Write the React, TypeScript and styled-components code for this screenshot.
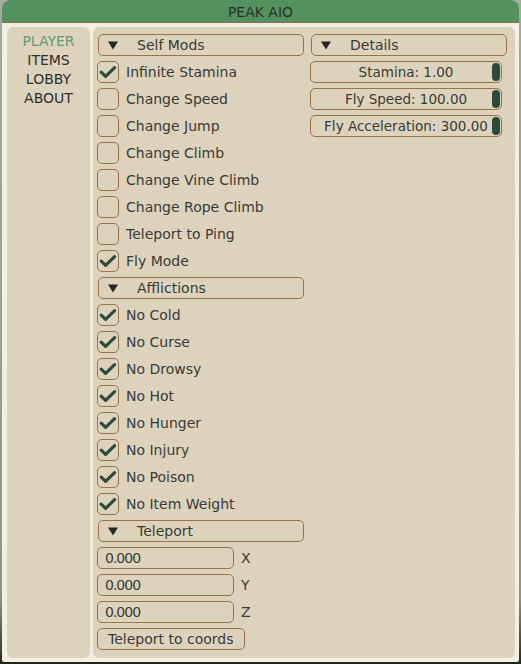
import React from "react";
import styled, { createGlobalStyle } from "styled-components";

const GlobalStyle = createGlobalStyle`
  html, body {
    margin: 0;
    height: 100%;
  }
  body {
    background: linear-gradient(to bottom, #a4ab9f 0%, #8a968b 90%, #2b3024 99.4%, #1e241a 100%);
    font-family: "DejaVu Sans", "Noto Sans", sans-serif;
    color: #3a3a36;
  }
`;

const Window = styled.div`
  margin-left: 2px;
  width: 517px;
  height: 662px;
  background: #f3efe3;
  border-radius: 8px 8px 2px 2px;
  display: flex;
  flex-direction: column;
  overflow: hidden;
`;

const TitleBar = styled.div`
  height: 23px;
  flex: none;
  background: #53915f;
  border-bottom: 1px solid #8d6e4c;
  display: flex;
  align-items: center;
  justify-content: center;
  font-size: 14px;
  color: #2b302b;
  box-sizing: border-box;
  padding-top: 1px;
`;

const Body = styled.div`
  flex: 1;
  display: flex;
  gap: 3px;
  padding: 4px 4px 4px 5px;
  min-height: 0;
`;

const Sidebar = styled.nav`
  width: 83px;
  flex: none;
  background: #ddd3bd;
  border-radius: 6px;
  padding-top: 5px;
  display: flex;
  flex-direction: column;
  align-items: center;
`;

const NavItem = styled.div<{ $active?: boolean }>`
  font-size: 14px;
  height: 19px;
  line-height: 19px;
  color: ${(p) => (p.$active ? "#5f9d6c" : "#2f2f2c")};
`;

const Main = styled.main`
  flex: 1;
  background: #ddd3bd;
  border-radius: 6px;
  padding: 7px 4px;
  display: grid;
  grid-template-columns: 207px 197px;
  column-gap: 6px;
  align-items: start;
`;

const Column = styled.div`
  display: flex;
  flex-direction: column;
  gap: 5px;
`;

const Header = styled.div<{ $width: number }>`
  box-sizing: border-box;
  height: 22px;
  width: ${(p) => p.$width}px;
  margin-left: 1px;
  border: 1px solid #9b7249;
  border-radius: 5px;
  display: flex;
  align-items: center;
  padding-left: 9px;
  font-size: 14px;
  color: #3a3a36;
`;

const HeaderTitle = styled.span`
  margin-left: 19px;
`;

const Row = styled.label`
  display: flex;
  align-items: center;
  gap: 7px;
  height: 22px;
  font-size: 14px;
  color: #3a3a36;
`;

const Box = styled.span`
  box-sizing: border-box;
  width: 22px;
  height: 22px;
  border: 1px solid #9b7249;
  border-radius: 5px;
  display: flex;
  flex: none;
`;

const Slider = styled.div`
  position: relative;
  box-sizing: border-box;
  width: 192px;
  height: 22px;
  border: 1px solid #9b7249;
  border-radius: 5px;
  display: flex;
  align-items: center;
  justify-content: center;
  font-size: 13.5px;
  color: #3a3a36;
`;

const Knob = styled.span`
  position: absolute;
  right: 1px;
  top: 1px;
  width: 8px;
  height: 18px;
  border-radius: 4px;
  background: #2c4a3a;
`;

const InputRow = styled.div`
  display: flex;
  align-items: center;
  gap: 7px;
  height: 22px;
  font-size: 14px;
  color: #3a3a36;
`;

const Field = styled.div`
  box-sizing: border-box;
  width: 137px;
  height: 22px;
  border: 1px solid #9b7249;
  border-radius: 5px;
  padding-left: 7px;
  display: flex;
  align-items: center;
  font-size: 14px;
  letter-spacing: -1px;
`;

const Button = styled.button`
  align-self: flex-start;
  box-sizing: border-box;
  height: 22px;
  padding: 0 11px 0 10px;
  background: transparent;
  border: 1px solid #9b7249;
  border-radius: 5px;
  font-family: inherit;
  font-size: 14px;
  color: #3a3a36;
  cursor: pointer;
`;

const Triangle = () => (
  <svg width="10" height="9" viewBox="0 0 10 9">
    <path d="M0 0.5 H10 L5 8.5 Z" fill="#262624" />
  </svg>
);

const Check = () => (
  <svg width="20" height="20" viewBox="0 0 20 20">
    <path
      d="M3.2 10.2 L7.6 14.4 L16.6 5.6"
      fill="none"
      stroke="#2b4b3b"
      strokeWidth="3.2"
      strokeLinecap="round"
      strokeLinejoin="round"
    />
  </svg>
);

const Toggle = ({ label, on }: { label: string; on?: boolean }) => (
  <Row>
    <Box>{on && <Check />}</Box>
    {label}
  </Row>
);

const selfMods: [string, boolean][] = [
  ["Infinite Stamina", true],
  ["Change Speed", false],
  ["Change Jump", false],
  ["Change Climb", false],
  ["Change Vine Climb", false],
  ["Change Rope Climb", false],
  ["Teleport to Ping", false],
  ["Fly Mode", true],
];

const afflictions = [
  "No Cold",
  "No Curse",
  "No Drowsy",
  "No Hot",
  "No Hunger",
  "No Injury",
  "No Poison",
  "No Item Weight",
];

const details = ["Stamina: 1.00", "Fly Speed: 100.00", "Fly Acceleration: 300.00"];

export default function App() {
  return (
    <>
      <GlobalStyle />
      <Window>
        <TitleBar>PEAK AIO</TitleBar>
        <Body>
          <Sidebar>
            <NavItem $active>PLAYER</NavItem>
            <NavItem>ITEMS</NavItem>
            <NavItem>LOBBY</NavItem>
            <NavItem>ABOUT</NavItem>
          </Sidebar>
          <Main>
            <Column>
              <Header $width={206}>
                <Triangle />
                <HeaderTitle>Self Mods</HeaderTitle>
              </Header>
              {selfMods.map(([l, on]) => (
                <Toggle key={l} label={l} on={on} />
              ))}
              <Header $width={206}>
                <Triangle />
                <HeaderTitle>Afflictions</HeaderTitle>
              </Header>
              {afflictions.map((l) => (
                <Toggle key={l} label={l} on />
              ))}
              <Header $width={206}>
                <Triangle />
                <HeaderTitle>Teleport</HeaderTitle>
              </Header>
              {["X", "Y", "Z"].map((axis) => (
                <InputRow key={axis}>
                  <Field>0.000</Field>
                  {axis}
                </InputRow>
              ))}
              <Button>Teleport to coords</Button>
            </Column>
            <Column>
              <Header $width={196}>
                <Triangle />
                <HeaderTitle>Details</HeaderTitle>
              </Header>
              {details.map((d) => (
                <Slider key={d}>
                  {d}
                  <Knob />
                </Slider>
              ))}
            </Column>
          </Main>
        </Body>
      </Window>
    </>
  );
}
